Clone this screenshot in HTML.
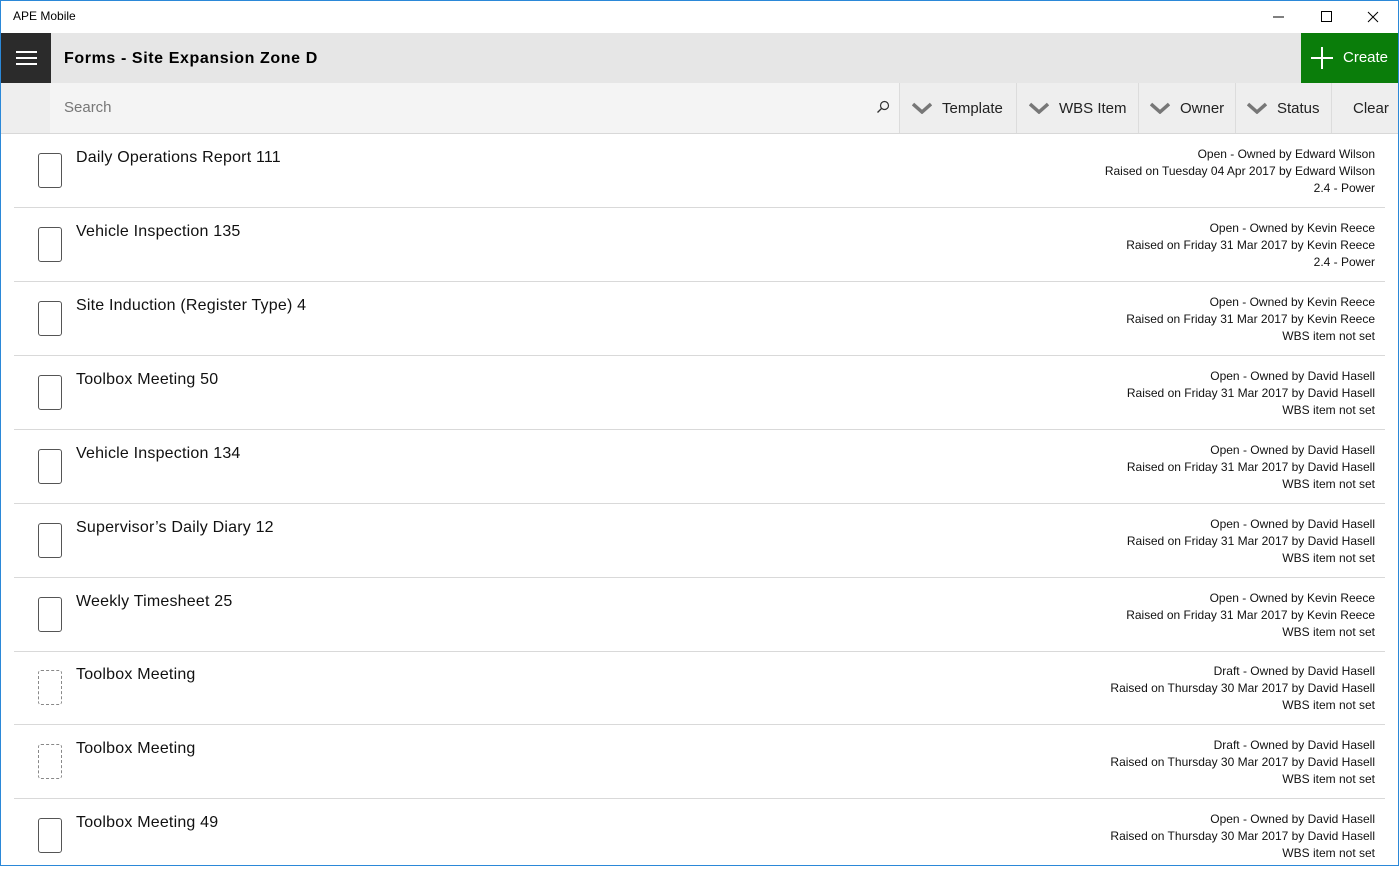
<!DOCTYPE html>
<html><head><meta charset="utf-8"><style>
*{margin:0;padding:0;box-sizing:border-box}
body{width:1399px;height:866px;overflow:hidden;font-family:"Liberation Sans",sans-serif;background:#fff;position:relative;color:#000}
.frame{position:absolute;inset:0;border:1px solid #2b88d8;pointer-events:none;z-index:9}
.tb{position:absolute;left:0;top:0;width:1399px;height:33px;background:#fff}
.tb .t{position:absolute;left:13px;top:9px;font-size:12px}
.hdr{position:absolute;left:1px;top:33px;width:1397px;height:50px;background:#e6e6e6}
.ham{position:absolute;left:0;top:0;width:50px;height:50px;background:#2b2b2b}
.ham i{position:absolute;left:15px;width:21px;height:2px;background:#fff}
.ttl{position:absolute;left:63px;top:17px;font-size:16px;font-weight:bold;letter-spacing:0.6px}
.create{position:absolute;right:0;top:0;width:97px;height:50px;background:#0a7d0a;color:#fff;font-size:15px}
.sr{position:absolute;left:1px;top:83px;width:1397px;height:51px;background:#eeeeee;border-bottom:1px solid #d8d8d8}
.si{position:absolute;left:49px;top:0;width:849px;height:50px;background:#f4f4f4}
.si span{position:absolute;left:14px;top:16px;font-size:15px;color:#777}
.f{position:absolute;top:0;height:50px;border-left:1px solid #dcdcdc;font-size:15px;color:#222}
.f span{position:absolute;top:17px}
.row{position:absolute;left:0;width:1399px;height:74px}
.sep{position:absolute;left:14px;right:14px;bottom:0;height:1px;background:#d9d9d9}
.ic{position:absolute;left:38px;top:19px;width:24px;height:35px;border:1px solid #555;border-radius:3px}
.ic.d{border:1px dashed #888}
.nm{position:absolute;left:76px;top:15px;font-size:16px;color:#111;letter-spacing:0.2px}
.mt{position:absolute;right:24px;top:12px;text-align:right;font-size:12px;line-height:17px;color:#111}
</style></head><body>
<div class="frame"></div>
<div class="tb"><div class="t">APE Mobile</div>
<svg style="position:absolute;left:1270px;top:10px" width="120" height="14"><path d="M3 7h11" stroke="#000"/><path d="M51.5 1.5h10v10h-10z" stroke="#000" fill="none"/><path d="M98 2l10 10M108 2l-10 10" stroke="#000"/></svg>
</div>
<div class="hdr">
<div class="ham"><i style="top:18px"></i><i style="top:24px"></i><i style="top:30px"></i></div>
<div class="ttl">Forms - Site Expansion Zone D</div>
<div class="create"><svg style="position:absolute;left:10px;top:14px" width="22" height="22"><path d="M11 0v22M0 11h22" stroke="#fff" stroke-width="2"/></svg><span style="position:absolute;left:42px;top:16px">Create</span></div>
</div>
<div class="sr">
<div class="si"><span>Search</span>
<svg style="position:absolute;left:826px;top:17px" width="14" height="14"><circle cx="8.5" cy="5.5" r="4" stroke="#333" fill="none" stroke-width="1.2"/><path d="M5.5 8.5L1.5 12.5" stroke="#333" stroke-width="1.3"/></svg></div>
<div class="f" style="left:898px;width:117px"><svg style="position:absolute;left:12px;top:19px" width="20" height="12"><path d="M1 2l9 8 9-8" stroke="#777" stroke-width="3.5" fill="none"/></svg><span style="left:42px">Template</span></div>
<div class="f" style="left:1015px;width:122px"><svg style="position:absolute;left:12px;top:19px" width="20" height="12"><path d="M1 2l9 8 9-8" stroke="#777" stroke-width="3.5" fill="none"/></svg><span style="left:42px">WBS Item</span></div>
<div class="f" style="left:1137px;width:97px"><svg style="position:absolute;left:11px;top:19px" width="20" height="12"><path d="M1 2l9 8 9-8" stroke="#777" stroke-width="3.5" fill="none"/></svg><span style="left:41px">Owner</span></div>
<div class="f" style="left:1234px;width:96px"><svg style="position:absolute;left:11px;top:19px" width="20" height="12"><path d="M1 2l9 8 9-8" stroke="#777" stroke-width="3.5" fill="none"/></svg><span style="left:41px">Status</span></div>
<div class="f" style="left:1330px;width:67px"><span style="left:21px">Clear</span></div>
</div>

<div class="row" style="top:134px"><div class="ic"></div><div class="nm">Daily Operations Report 111</div><div class="mt">Open - Owned by Edward Wilson<br>Raised on Tuesday 04 Apr 2017 by Edward Wilson<br>2.4 - Power</div><div class="sep"></div></div>
<div class="row" style="top:208px"><div class="ic"></div><div class="nm">Vehicle Inspection 135</div><div class="mt">Open - Owned by Kevin Reece<br>Raised on Friday 31 Mar 2017 by Kevin Reece<br>2.4 - Power</div><div class="sep"></div></div>
<div class="row" style="top:282px"><div class="ic"></div><div class="nm">Site Induction (Register Type) 4</div><div class="mt">Open - Owned by Kevin Reece<br>Raised on Friday 31 Mar 2017 by Kevin Reece<br>WBS item not set</div><div class="sep"></div></div>
<div class="row" style="top:356px"><div class="ic"></div><div class="nm">Toolbox Meeting 50</div><div class="mt">Open - Owned by David Hasell<br>Raised on Friday 31 Mar 2017 by David Hasell<br>WBS item not set</div><div class="sep"></div></div>
<div class="row" style="top:430px"><div class="ic"></div><div class="nm">Vehicle Inspection 134</div><div class="mt">Open - Owned by David Hasell<br>Raised on Friday 31 Mar 2017 by David Hasell<br>WBS item not set</div><div class="sep"></div></div>
<div class="row" style="top:504px"><div class="ic"></div><div class="nm">Supervisor’s Daily Diary 12</div><div class="mt">Open - Owned by David Hasell<br>Raised on Friday 31 Mar 2017 by David Hasell<br>WBS item not set</div><div class="sep"></div></div>
<div class="row" style="top:578px"><div class="ic"></div><div class="nm">Weekly Timesheet 25</div><div class="mt">Open - Owned by Kevin Reece<br>Raised on Friday 31 Mar 2017 by Kevin Reece<br>WBS item not set</div><div class="sep"></div></div>
<div class="row" style="top:651px"><div class="ic d"></div><div class="nm">Toolbox Meeting</div><div class="mt">Draft - Owned by David Hasell<br>Raised on Thursday 30 Mar 2017 by David Hasell<br>WBS item not set</div><div class="sep"></div></div>
<div class="row" style="top:725px"><div class="ic d"></div><div class="nm">Toolbox Meeting</div><div class="mt">Draft - Owned by David Hasell<br>Raised on Thursday 30 Mar 2017 by David Hasell<br>WBS item not set</div><div class="sep"></div></div>
<div class="row" style="top:799px"><div class="ic"></div><div class="nm">Toolbox Meeting 49</div><div class="mt">Open - Owned by David Hasell<br>Raised on Thursday 30 Mar 2017 by David Hasell<br>WBS item not set</div></div>
</body></html>
